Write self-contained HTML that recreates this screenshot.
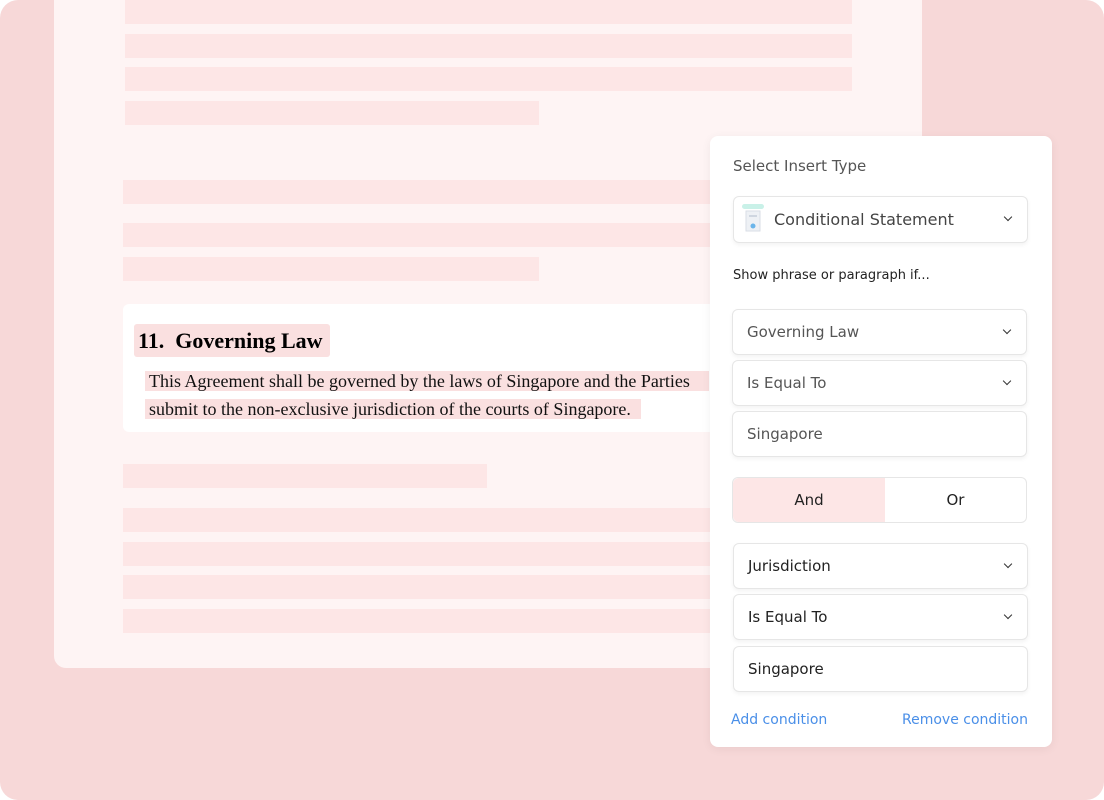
<!DOCTYPE html><html><head><style>
body{margin:0;width:1104px;height:800px;background:#fff;overflow:hidden;font-family:"Liberation Sans",sans-serif}
.bg{position:absolute;left:0;top:0;width:1104px;height:800px;background:#f7d8d8;border-radius:18px}
.doc{position:absolute;left:54px;top:0;width:868px;height:668px;background:#fef4f4;border-radius:0 0 12px 12px}
.bar{position:absolute;background:#fde6e6;height:24px}
.card{position:absolute;left:123px;top:304px;width:620px;height:128px;background:#fff;border-radius:6px}
.h{position:absolute;left:134px;top:324px;width:196px;height:33px;background:#fae0e0;border-radius:3px;font:bold 22px "Liberation Serif",serif;line-height:33px;padding-left:4px;box-sizing:border-box;white-space:nowrap}
.p{position:absolute;left:145px;height:20px;background:#fae0e0;font:18px "Liberation Serif",serif;line-height:20px;padding-left:4px;color:#111;white-space:nowrap}
.panel{position:absolute;left:710px;top:136px;width:342px;height:611px;background:#fff;border-radius:8px;box-shadow:0 2px 10px rgba(0,0,0,.06);font-family:"DejaVu Sans",sans-serif}
.t{position:absolute;font-size:15px;color:#555}
.f{position:absolute;left:22px;width:295px;height:46px;border:1px solid #e6e6e6;border-radius:6px;box-sizing:border-box;box-shadow:0 2px 4px rgba(0,0,0,.05);font-size:15px;line-height:44px;padding-left:14px;color:#555}
.f.d{color:#222}
.chev{position:absolute;right:16px;top:17px;width:5px;height:5px;border-right:1.5px solid #333;border-bottom:1.5px solid #333;transform:rotate(45deg)}
.l{position:absolute;top:576px;font-size:14px;color:#4a8fe8}
</style></head><body>
<div class="bg"></div>
<div class="doc"></div>
<div class="bar" style="left:125px;top:0;width:727px"></div>
<div class="bar" style="left:125px;top:34px;width:727px"></div>
<div class="bar" style="left:125px;top:67px;width:727px"></div>
<div class="bar" style="left:125px;top:101px;width:414px"></div>
<div class="bar" style="left:123px;top:180px;width:600px"></div>
<div class="bar" style="left:123px;top:223px;width:600px"></div>
<div class="bar" style="left:123px;top:257px;width:416px"></div>
<div class="bar" style="left:123px;top:464px;width:364px"></div>
<div class="bar" style="left:123px;top:508px;width:600px"></div>
<div class="bar" style="left:123px;top:542px;width:600px"></div>
<div class="bar" style="left:123px;top:575px;width:600px"></div>
<div class="bar" style="left:123px;top:609px;width:600px"></div>
<div class="card"></div>
<div class="h">11.&nbsp; Governing Law</div>
<div class="p" style="top:371px;width:560px">This Agreement shall be governed by the laws of Singapore and the Parties</div>
<div class="p" style="top:399px;width:492px">submit to the non-exclusive jurisdiction of the courts of Singapore.</div>
<div class="panel">
<div class="t" style="left:23px;top:21px">Select Insert Type</div>
<div class="f" style="top:60px;height:47px;left:23px;padding-left:40px;font-weight:500;font-size:16px;color:#444;line-height:45px">Conditional Statement<div class="chev"></div>
<svg style="position:absolute;left:8px;top:7px" width="22" height="30"><rect x="0" y="0" width="22" height="5" rx="2.5" fill="#c9f1e8"/><rect x="4" y="7" width="14" height="20" fill="#eef1f5" stroke="#d9dee6"/><rect x="7" y="11" width="8" height="2" fill="#cfd6e0"/><circle cx="11" cy="22" r="2.5" fill="#6bb5ea"/></svg></div>
<div class="t" style="left:23px;top:132px;font-size:13px;color:#222">Show phrase or paragraph if...</div>
<div class="f" style="top:173px">Governing Law<div class="chev"></div></div>
<div class="f" style="top:224px">Is Equal To<div class="chev"></div></div>
<div class="f" style="top:275px">Singapore</div>
<div class="f" style="top:341px;padding:0;display:flex;color:#222;box-shadow:none"><div style="width:152px;background:#fde6e6;text-align:center;border-radius:6px 0 0 6px">And</div><div style="flex:1;text-align:center">Or</div></div>
<div class="f d" style="top:407px;left:23px">Jurisdiction<div class="chev"></div></div>
<div class="f d" style="top:458px;left:23px">Is Equal To<div class="chev"></div></div>
<div class="f d" style="top:510px;left:23px">Singapore</div>
<div class="l" style="left:21px">Add condition</div>
<div class="l" style="right:24px">Remove condition</div>
</div>
</body></html>
